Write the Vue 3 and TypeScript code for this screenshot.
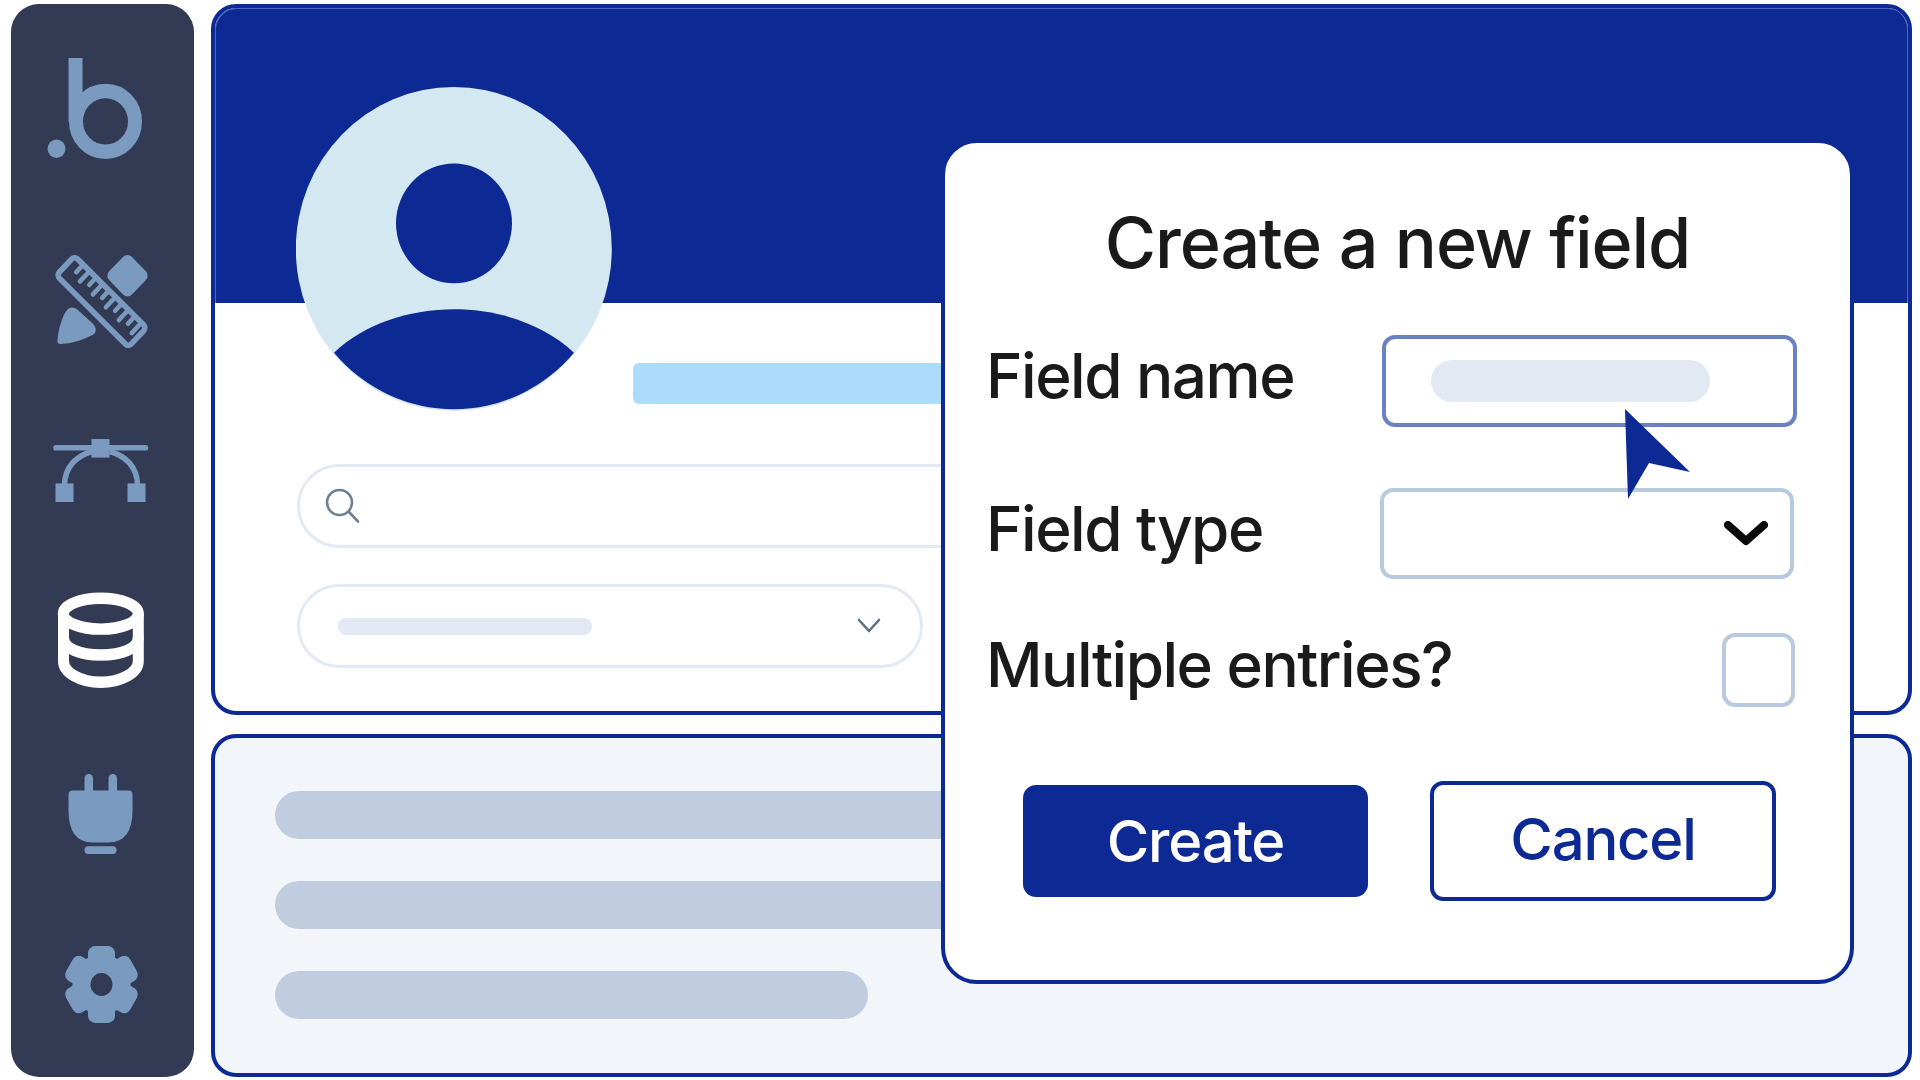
<script setup lang="ts">
const ticks: { x: number; long: boolean }[] = [-38, -29, -20, -11, -2, 7, 16, 25, 34, 43].map((x, i) => ({ x, long: i % 2 === 1 }));
const teeth: number[] = [0, 60, 120];
</script>

<template>
  <div class="page">
    <aside class="sidebar">
      <svg class="ico logo" viewBox="42.5 56 120 98" width="120" height="101" preserveAspectRatio="none">
        <circle cx="105" cy="117.5" r="29.5" fill="none" stroke="#7a9abf" stroke-width="14" />
        <rect x="68" y="56" width="14" height="62" fill="#7a9abf" />
        <circle cx="56" cy="144" r="9" fill="#7a9abf" />
      </svg>
      <svg class="ico tools" viewBox="42.5 245 120 94" width="120" height="97" preserveAspectRatio="none">
        <g transform="translate(101 292) rotate(44)">
          <rect x="-50" y="-13" width="100" height="26" rx="4" fill="none" stroke="#7a9abf" stroke-width="5.5" />
          <line v-for="t in ticks" :key="t.x" :x1="t.x" y1="-11" :x2="t.x" :y2="t.long ? 1 : -3" stroke="#7a9abf" stroke-width="4.5" stroke-linecap="round" />
        </g>
        <rect x="111" y="251" width="32" height="32" rx="6" transform="rotate(45 127 267)" fill="#7a9abf" />
        <path d="M57 329 C58 318 62 306 66 301 C69 297 73 297 77 300 L92 313 C97 318 96 323 91 325 C80 330 70 333 62 333 Q56 334 57 329Z" fill="#7a9abf" />
      </svg>
      <svg class="ico bezier" viewBox="42.5 425 120 61" width="120" height="63" preserveAspectRatio="none">
        <path d="M64 470 C64 452 76 441 92 437 M137 470 C137 452 125 441 109 437" fill="none" stroke="#7a9abf" stroke-width="5.5" />
        <line x1="55.5" y1="433.5" x2="145" y2="433.5" stroke="#7a9abf" stroke-width="5.5" stroke-linecap="round" />
        <rect x="91" y="425" width="18" height="18" fill="#7a9abf" />
        <rect x="55" y="468" width="18" height="18" fill="#7a9abf" />
        <rect x="127" y="468" width="18" height="18" fill="#7a9abf" />
      </svg>
      <svg class="ico db" viewBox="42.5 589 120 95" width="120" height="98" preserveAspectRatio="none">
        <g fill="none" stroke="#fff" stroke-width="11" stroke-linecap="round">
          <ellipse cx="100.3" cy="611" rx="37.5" ry="15" />
          <path d="M63 611 V657 C63 668 80 677.5 100.3 677.5 S137.8 668 137.8 657 V611" />
          <path d="M63 634 C63 645 80 651 100.3 651 S137.8 645 137.8 634" />
        </g>
      </svg>
      <svg class="ico plug" viewBox="42.5 767 120 77" width="120" height="80" preserveAspectRatio="none">
        <rect x="84" y="767" width="8.5" height="24" rx="4.2" fill="#7a9abf" />
        <rect x="108" y="767" width="8.5" height="24" rx="4.2" fill="#7a9abf" />
        <path d="M72 783 H128 Q132 783 132 787 V802 Q132 833 108 833 H92 Q68 833 68 802 V787 Q68 783 72 783Z" fill="#7a9abf" />
        <rect x="84" y="836.5" width="32" height="7.5" rx="3.5" fill="#7a9abf" />
      </svg>
      <svg class="ico gear" viewBox="42.5 933 120 74" width="120" height="77" preserveAspectRatio="none">
        <circle cx="101" cy="970" r="29" fill="#7a9abf" />
        <rect v-for="a in teeth" :key="a" x="87.5" y="933" width="27" height="74" rx="7" :transform="`rotate(${a} 101 970)`" fill="#7a9abf" />
        <circle cx="101" cy="970" r="11" fill="#323a54" />
      </svg>
    </aside>

    <main class="main">
      <section class="card profile">
        <div class="banner">
          <svg class="avatar" viewBox="296 87 316 322" width="316" height="324" preserveAspectRatio="none">
            <ellipse cx="453.8" cy="248" rx="158" ry="161" fill="#d4e8f2" />
            <ellipse cx="454" cy="222.5" rx="58" ry="59.5" fill="#0d2a94" />
            <path d="M334 351 C365 322 410 308 454 308 C498 308 543 322 574 351 A158 161 0 0 1 334 351Z" fill="#0d2a94" />
          </svg>
        </div>
        <div class="profile-body">
          <div class="namebar"></div>
          <div class="pill search">
            <svg viewBox="0 0 36 36" width="36" height="36">
              <circle cx="15.5" cy="14.5" r="12.5" fill="none" stroke="#6f7f92" stroke-width="2.6" />
              <line x1="25" y1="24" x2="34" y2="33.5" stroke="#6f7f92" stroke-width="2.6" stroke-linecap="round" />
            </svg>
          </div>
          <div class="pill select">
            <div class="select-bar"></div>
            <svg viewBox="0 0 24 16" width="24" height="16">
              <path d="M2 2 L12 13 L22 2" fill="none" stroke="#5d6f86" stroke-width="2.6" stroke-linecap="round" stroke-linejoin="round" />
            </svg>
          </div>
        </div>
      </section>

      <section class="card list">
        <div class="line"></div>
        <div class="line"></div>
        <div class="line short"></div>
      </section>
    </main>

    <div class="dialog">
      <h1 class="title">Create a new field</h1>
      <div class="row row-name">
        <span class="label">Field name</span>
        <div class="input name-input"><div class="input-bar"></div></div>
      </div>
      <div class="row row-type">
        <span class="label">Field type</span>
        <div class="input type-input">
          <svg viewBox="0 0 44 26" width="44" height="26">
            <path d="M4 4 L22 20 L40 4" fill="none" stroke="#0b0b0b" stroke-width="8" stroke-linejoin="round" stroke-linecap="round" />
          </svg>
        </div>
      </div>
      <div class="row row-multi">
        <span class="label">Multiple entries?</span>
        <div class="check"></div>
      </div>
      <div class="actions">
        <button class="btn primary" type="button">Create</button>
        <button class="btn ghost" type="button"><span class="ghost-text">Cancel</span></button>
      </div>
      <svg class="cursor" viewBox="0 0 66 91" width="66" height="91">
        <path d="M1 0 L66 63 L25 54 L4 90Z" fill="#0d2a94" />
      </svg>
    </div>
  </div>
</template>

<style>
html, body { margin: 0; background: #fff; }
</style>

<style scoped>
.page {
  position: relative;
  box-sizing: border-box;
  width: 1920px;
  height: 1080px;
  display: flex;
  gap: 17px;
  padding: 4px 8px 3px 11px;
  background: #fff;
  font-family: Inter, "Liberation Sans", sans-serif;
  overflow: hidden;
}
.sidebar {
  width: 183px;
  flex: none;
  box-sizing: border-box;
  padding-top: 54px;
  border-radius: 28px;
  background: #323a54;
  display: flex;
  flex-direction: column;
  align-items: center;
}
.ico { display: block; flex: none; }
.tools { margin-top: 94px; }
.bezier { margin-top: 89px; }
.db { margin-top: 89px; }
.plug { margin-top: 85px; }
.gear { margin-top: 92px; }

.main {
  flex: 1;
  display: flex;
  flex-direction: column;
  gap: 19px;
  min-width: 0;
}
.card {
  box-sizing: border-box;
  border: 4px solid #0d2a94;
  border-radius: 25px;
  overflow: hidden;
}
.profile { height: 711px; background: #fff; flex: none; }
.banner {
  box-sizing: border-box;
  height: 295px;
  padding: 79px 0 0 81px;
  background: #0d2a94;
  border-radius: 21px 21px 0 0;
  box-shadow: inset 1px 1px 0 #4c66bb, inset -1px 0 0 #4c66bb;
}
.avatar { display: block; }
.profile-body { padding: 60px 0 0 82px; }
.namebar {
  width: 420px;
  height: 41px;
  margin-left: 336px;
  border-radius: 6px;
  background: #abdcfb;
}
.pill {
  box-sizing: border-box;
  height: 84px;
  border: 3px solid #e3eaf3;
  border-radius: 42px;
  display: flex;
  align-items: center;
}
.search { width: 750px; margin-top: 60px; padding-left: 24px; }
.select {
  width: 626px;
  margin-top: 36px;
  padding: 0 39px 0 38px;
  justify-content: space-between;
}
.select-bar {
  width: 254px;
  height: 17px;
  border-radius: 8px;
  background: #e2e9f3;
}
.list {
  flex: 1;
  background: #f2f6fb;
  padding: 53px 0 0 60px;
  display: flex;
  flex-direction: column;
  gap: 42px;
}
.line {
  width: 900px;
  height: 48px;
  border-radius: 24px;
  background: #c0cde0;
}
.line.short { width: 593px; }

.dialog {
  position: absolute;
  left: 941px;
  top: 139px;
  box-sizing: border-box;
  width: 913px;
  height: 845px;
  border: 4px solid #0d2a94;
  border-radius: 36px;
  background: #fff;
  color: #1a1a1a;
}
.title {
  margin: 60px 0 0 0;
  text-align: center;
  font-size: 70px;
  line-height: 80px;
  font-weight: 450;
  letter-spacing: -1.1px;
}
.row { display: flex; align-items: center; justify-content: space-between; padding-left: 41px; }
.label {
  font-size: 62px;
  line-height: 72px;
  font-weight: 450;
  letter-spacing: -1.5px;
  padding-bottom: 10px;
}
.row-name { margin-top: 52px; padding-right: 53px; }
.row-type { margin-top: 61px; padding-right: 56px; }
.row-multi { margin-top: 50px; padding-right: 55px; }
.input {
  box-sizing: border-box;
  border-radius: 13px;
  display: flex;
  align-items: center;
}
.name-input {
  width: 415px;
  height: 92px;
  border: 4px solid #6c80c4;
  padding-left: 45px;
}
.input-bar {
  width: 279px;
  height: 42px;
  border-radius: 21px;
  background: #e2e9f3;
}
.type-input {
  width: 414px;
  height: 91px;
  border: 4px solid #b9c9de;
  justify-content: flex-end;
  padding-right: 22px;
}
.check {
  box-sizing: border-box;
  width: 73px;
  height: 74px;
  border: 4px solid #b9c9de;
  border-radius: 13px;
}
.actions {
  margin-top: 70px;
  padding-left: 78px;
  display: flex;
  align-items: center;
  gap: 62px;
}
.btn {
  box-sizing: border-box;
  font-family: inherit;
  font-size: 58px;
  font-weight: 450;
  letter-spacing: -1.2px;
  border-radius: 13px;
  padding: 0;
}
.primary {
  width: 345px;
  height: 112px;
  border: none;
  background: #0d2a94;
  color: #fff;
}
.ghost {
  width: 346px;
  height: 120px;
  border: 4px solid #0d2a94;
  background: #fff;
  color: #0d2a94;
}
.ghost-text { display: block; padding-bottom: 4px; }
.cursor {
  position: absolute;
  left: 679px;
  top: 266px;
}
</style>
